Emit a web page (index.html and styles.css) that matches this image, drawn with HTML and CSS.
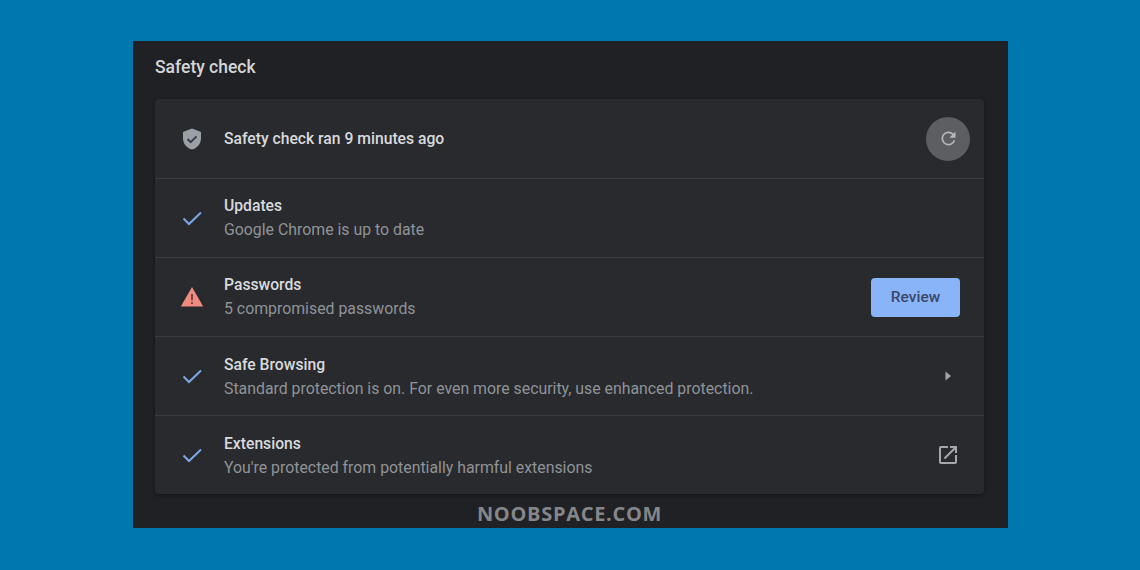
FILE: index.html
```html
<!DOCTYPE html>
<html lang="en">
  <head>
    <meta charset="UTF-8" />
    <title>Safety check</title>
    <link rel="stylesheet" href="styles.css">
  </head>
  <body>
    <div class="panel">
      <h1 class="heading">Safety check</h1>
      <div class="card">
        <div class="row">
          <div class="row-icon">
            <svg width="24" height="24" viewBox="0 0 24 24"><path fill="#9aa0a6" d="M12 1.500 3 5v6.200c0 5.400 3.800 10.100 9 11.300 5.200-1.200 9-5.900 9-11.300V5z"/><path fill="none" stroke="#3a3c40" stroke-width="2" d="m7.500 12 3.200 3.200 5.800-5.800"/></svg>
          </div>
          <div class="row-text">
            <div class="row-title">Safety check ran 9 minutes ago</div>
          </div>
          <div class="refresh">
            <svg width="21" height="21" viewBox="0 0 24 24"><path fill="#b4b7bb" d="M17.650 6.350A8 8 0 1 0 19.730 14h-2.080a6 6 0 1 1-1.410-6.240L13 11h7V4z"/></svg>
          </div>
        </div>
        <div class="row row-raised">
          <div class="row-icon">
            <svg width="24" height="24" viewBox="0 0 24 24"><path fill="none" stroke="#7ea6e6" stroke-width="2" d="m3.500 12.500 5.500 5.500L21 6.500"/></svg>
          </div>
          <div class="row-text">
            <div class="row-title">Updates</div>
            <div class="row-sub">Google Chrome is up to date</div>
          </div>
        </div>
        <div class="row row-raised">
          <div class="row-icon">
            <svg width="24" height="24" viewBox="0 0 24 24"><path fill="#ee8a80" d="M12 2 .8 21.500h22.400z"/><path fill="#7a4643" d="M11 9h2v6.500h-2zM11 17h2v2h-2z"/></svg>
          </div>
          <div class="row-text">
            <div class="row-title">Passwords</div>
            <div class="row-sub">5 compromised passwords</div>
          </div>
          <button class="review">Review</button>
        </div>
        <div class="row row-lowered">
          <div class="row-icon">
            <svg width="24" height="24" viewBox="0 0 24 24"><path fill="none" stroke="#7ea6e6" stroke-width="2" d="m3.500 12.500 5.500 5.500L21 6.500"/></svg>
          </div>
          <div class="row-text">
            <div class="row-title">Safe Browsing</div>
            <div class="row-sub">Standard protection is on. For even more security, use enhanced protection.</div>
          </div>
          <div class="action-icon">
            <svg width="24" height="24" viewBox="0 0 24 24"><path fill="#a4a7ab" d="M9.500 7.500 15 12l-5.500 4.500z"/></svg>
          </div>
        </div>
        <div class="row row-lowered">
          <div class="row-icon">
            <svg width="24" height="24" viewBox="0 0 24 24"><path fill="none" stroke="#7ea6e6" stroke-width="2" d="m3.500 12.500 5.500 5.500L21 6.500"/></svg>
          </div>
          <div class="row-text">
            <div class="row-title">Extensions</div>
            <div class="row-sub">You're protected from potentially harmful extensions</div>
          </div>
          <div class="action-icon">
            <svg width="24" height="24" viewBox="0 0 24 24"><path fill="#a4a7ab" d="M19 19H5V5h7V3H5a2 2 0 0 0-2 2v14c0 1.100.9 2 2 2h14a2 2 0 0 0 2-2v-7h-2zM14 3v2h3.590l-9.830 9.830 1.410 1.410L19 6.410V10h2V3z"/></svg>
          </div>
        </div>
      </div>
      <div class="watermark">NOOBSPACE.COM</div>
    </div>
  </body>
</html>
```

FILE: styles.css
```css
body {
  font-family: Roboto, Arial, sans-serif;
  background-color: #0077ae;
  margin: 0;
  height: 570px;
  overflow: hidden;
  padding-top: 41px;
  box-sizing: border-box;
}

.panel {
  width: 875px;
  height: 487px;
  margin-left: 133px;
  padding: 0 24px 0 22px;
  box-sizing: border-box;
  background-color: #202124;
}

.heading {
  margin: 0;
  height: 58px;
  line-height: 52px;
  font-size: 17.500px;
  font-weight: 500;
  color: #d3d5d8;
}

.card {
  height: 395px;
  background-color: #292a2d;
  border-radius: 4px;
  box-shadow: 0 1px 4px rgba(0, 0, 0, 0.4);
}

.row {
  display: flex;
  align-items: center;
  height: 79px;
  box-sizing: border-box;
  padding: 0 14px 0 25px;
  border-top: 1px solid #3c3d40;
}

.row:first-child {
  border-top: none;
}

.row-icon {
  display: flex;
  width: 24px;
  margin-right: 19px;
}

.row-text {
  flex: 1;
  padding-left: 1px;
}

.row-raised .row-text {
  margin-top: -1px;
}

.row-lowered .row-text {
  margin-top: 1px;
}

.row-title {
  font-size: 15.700px;
  font-weight: 500;
  line-height: 24px;
  color: #d8dadd;
}

.row-sub {
  font-size: 15.850px;
  line-height: 24px;
  color: #8f9398;
}

.refresh {
  display: flex;
  align-items: center;
  justify-content: center;
  width: 44px;
  height: 44px;
  border-radius: 50%;
  background-color: #5c5e61;
}

.review {
  width: 89px;
  height: 39px;
  margin-right: 10px;
  border: none;
  border-radius: 4px;
  background-color: #8ab4f8;
  color: #3a4868;
  font-family: Roboto, Arial, sans-serif;
  font-size: 15.500px;
  font-weight: 500;
}

.action-icon {
  display: flex;
  margin-right: 10px;
}

.watermark {
  margin-top: 8px;
  text-align: center;
  font-family: "Open Sans", Arial, sans-serif;
  font-size: 20px;
  font-weight: 700;
  letter-spacing: 0.700px;
  line-height: 24px;
  color: #85868a;
}
```
